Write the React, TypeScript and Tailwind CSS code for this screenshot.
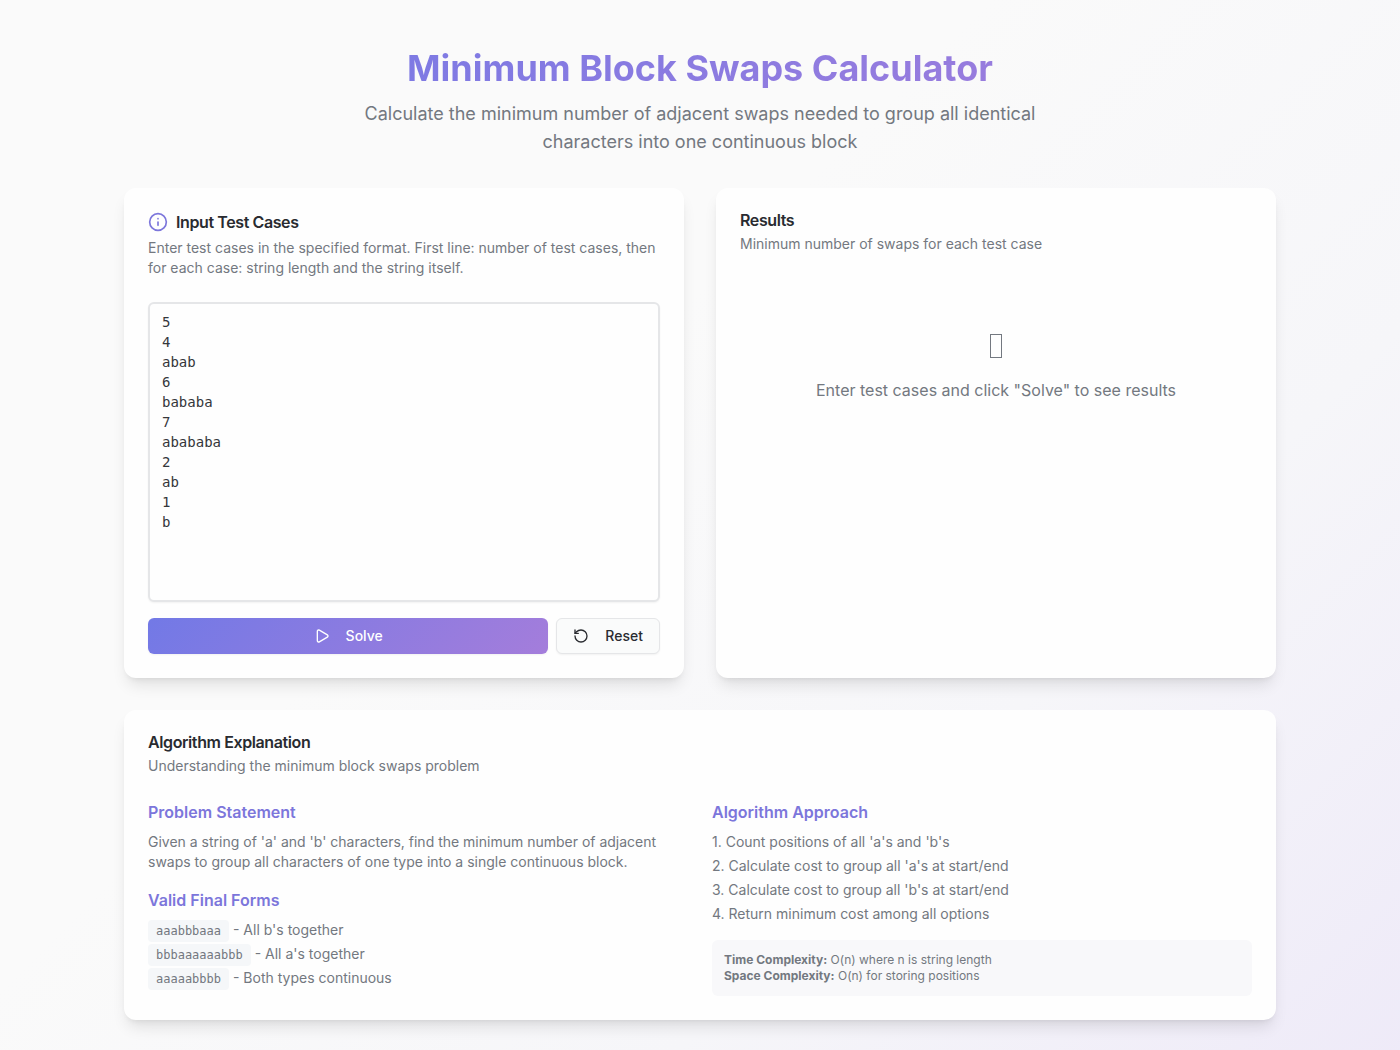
import React from "react";
import { Info, Play, RotateCcw } from "lucide-react";

interface FinalForm {
  code: string;
  text: string;
}

const sampleInput = ["5", "4", "abab", "6", "bababa", "7", "abababa", "2", "ab", "1", "b"].join("\n");

const finalForms: FinalForm[] = [
  { code: "aaabbbaaa", text: "All b's together" },
  { code: "bbbaaaaaabbb", text: "All a's together" },
  { code: "aaaaabbbb", text: "Both types continuous" },
];

const steps: string[] = [
  "1. Count positions of all 'a's and 'b's",
  "2. Calculate cost to group all 'a's at start/end",
  "3. Calculate cost to group all 'b's at start/end",
  "4. Return minimum cost among all options",
];

function Card({ children }: { children: React.ReactNode }) {
  return (
    <section className="rounded-xl bg-[#fefefe] p-6 shadow-[0_10px_15px_-3px_rgba(0,0,0,0.1),0_4px_6px_-4px_rgba(0,0,0,0.1)]">
      {children}
    </section>
  );
}

function SubHeading({ children }: { children: React.ReactNode }) {
  return <h3 className="mb-2 text-base font-semibold text-[#7c76db]">{children}</h3>;
}

function App() {
  const [input, setInput] = React.useState(sampleInput);

  return (
    <main className="min-h-screen bg-[linear-gradient(135deg,#fafafa_0%,#fafafa_40%,#f6f6f9_70%,#eeeaf8_100%)] px-4 py-12 font-['Inter',sans-serif] text-[#737880]">
      <div className="mx-auto max-w-6xl">
        {/* Header */}
        <header className="mb-8 text-center">
          <h1 className="mb-3 bg-[linear-gradient(135deg,#7279e6,#a47ddb)] bg-clip-text text-4xl font-bold text-transparent">
            Minimum Block Swaps Calculator
          </h1>
          <p className="mx-auto max-w-2xl text-lg leading-7">
            Calculate the minimum number of adjacent swaps needed to group all identical characters into one continuous
            block
          </p>
        </header>

        <div className="grid gap-8 md:grid-cols-2">
          {/* Input */}
          <Card>
            <h2 className="flex items-center gap-2 font-semibold leading-none tracking-tight text-[#292b30]">
              <Info className="size-5 text-[#7c76db]" />
              <label htmlFor="cases">Input Test Cases</label>
            </h2>
            <p className="mt-1.5 text-sm">
              Enter test cases in the specified format. First line: number of test cases, then for each case: string
              length and the string itself.
            </p>
            <textarea
              id="cases"
              value={input}
              onChange={(e) => setInput(e.target.value)}
              spellCheck={false}
              className="mt-6 block h-[300px] w-full resize-none rounded-md border-2 border-[#e5e6e8] bg-[#fefefe] px-3 py-2 font-['DejaVu_Sans_Mono',monospace] text-sm text-[#35373b] shadow-xs outline-none"
            />
            <div className="mt-4 flex gap-2">
              <button
                type="button"
                className="flex h-9 flex-1 items-center justify-center gap-4 rounded-md bg-[linear-gradient(135deg,#7279e6,#a47ddb)] px-4 text-sm font-medium text-white shadow-xs"
              >
                <Play className="size-4" />
                Solve
              </button>
              <button
                type="button"
                onClick={() => setInput(sampleInput)}
                className="flex h-9 items-center justify-center gap-4 rounded-md border border-[#e5e6e8] bg-[#fafbfb] px-4 text-sm font-medium text-[#292b30] shadow-xs"
              >
                <RotateCcw className="size-4" />
                Reset
              </button>
            </div>
          </Card>

          {/* Results */}
          <Card>
            <h2 className="font-semibold leading-none tracking-tight text-[#292b30]">Results</h2>
            <p className="mt-1.5 text-sm">Minimum number of swaps for each test case</p>
            <div className="flex flex-col items-center py-20">
              <svg className="h-6 w-3" viewBox="0 0 12 24" fill="none" stroke="currentColor" aria-hidden="true">
                <rect x="0.5" y="0.5" width="11" height="23" />
              </svg>
              <p className="mt-5 text-base">Enter test cases and click "Solve" to see results</p>
            </div>
          </Card>
        </div>

        {/* Explanation */}
        <div className="mt-8">
          <Card>
            <h2 className="font-semibold leading-none tracking-tight text-[#292b30]">Algorithm Explanation</h2>
            <p className="mt-1.5 text-sm">Understanding the minimum block swaps problem</p>
            <div className="mt-6 grid gap-6 text-sm md:grid-cols-2">
              <div>
                <SubHeading>Problem Statement</SubHeading>
                <p className="mb-4">
                  Given a string of 'a' and 'b' characters, find the minimum number of adjacent swaps to group all
                  characters of one type into a single continuous block.
                </p>
                <SubHeading>Valid Final Forms</SubHeading>
                <ul className="space-y-1">
                  {finalForms.map((form) => (
                    <li key={form.code}>
                      <code className="rounded-sm bg-[#f5f7f9] px-2 py-1 font-['DejaVu_Sans_Mono',monospace] text-xs">
                        {form.code}
                      </code>{" "}
                      - {form.text}
                    </li>
                  ))}
                </ul>
              </div>
              <div>
                <SubHeading>Algorithm Approach</SubHeading>
                <ol className="space-y-1">
                  {steps.map((step) => (
                    <li key={step}>{step}</li>
                  ))}
                </ol>
                <div className="mt-4 rounded-md bg-[#f8f8fa] p-3 text-xs">
                  <p>
                    <strong>Time Complexity:</strong> O(n) where n is string length
                  </p>
                  <p>
                    <strong>Space Complexity:</strong> O(n) for storing positions
                  </p>
                </div>
              </div>
            </div>
          </Card>
        </div>
      </div>
    </main>
  );
}

export default App;
